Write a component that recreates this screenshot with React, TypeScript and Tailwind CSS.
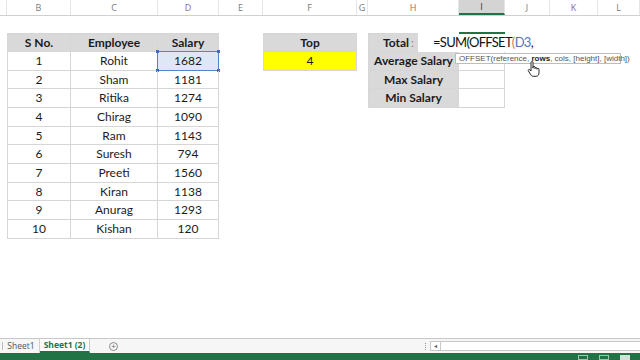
import React from "react";

const WIDTHS = [
  "w-[7px]",
  "w-[64px]",
  "w-[87px]",
  "w-[61px]",
  "w-[44px]",
  "w-[94px]",
  "w-[11px]",
  "w-[91px]",
  "w-[46px]",
  "w-[45px]",
  "w-[48px]",
  "w-[42px]",
];
const LETTERS = ["", "B", "C", "D", "E", "F", "G", "H", "I", "J", "K", "L"];

const table1 = [
  ["S No.", "Employee", "Salary"],
  ["1", "Rohit", "1682"],
  ["2", "Sham", "1181"],
  ["3", "Ritika", "1274"],
  ["4", "Chirag", "1090"],
  ["5", "Ram", "1143"],
  ["6", "Suresh", "794"],
  ["7", "Preeti", "1560"],
  ["8", "Kiran", "1138"],
  ["9", "Anurag", "1293"],
  ["10", "Kishan", "120"],
];
const labels = ["Total :", "Average Salary", "Max Salary", "Min Salary"];

const B = "border-r border-b border-[#d6d6d6]";

function Cell({
  col,
  cls = "",
  children,
}: {
  col: number;
  cls?: string;
  children?: React.ReactNode;
}) {
  return (
    <div
      className={`${WIDTHS[col]} shrink-0 h-full flex items-center justify-center relative ${cls}`}
    >
      {children}
    </div>
  );
}

function DataRow({ i }: { i: number }) {
  const head = i === 0;
  const t = table1[i];
  const top = head ? "border-t" : "";
  return (
    <div className="flex h-[18.7px] text-[12px] text-[#1b1b1b]">
      <Cell col={0} />
      <Cell
        col={1}
        cls={`${B} border-l ${top} ${head ? "bg-[#d9d9d9] font-bold" : ""}`}
      >
        {t[0]}
      </Cell>
      <Cell col={2} cls={`${B} ${top} ${head ? "bg-[#d9d9d9] font-bold" : ""}`}>
        {t[1]}
      </Cell>
      <Cell
        col={3}
        cls={`${B} ${top} ${head ? "bg-[#d9d9d9] font-bold" : ""} ${
          i === 1 ? "bg-[#dde7f5]" : ""
        }`}
      >
        {t[2]}
        {i === 1 && (
          <>
            <div className="absolute inset-[-1px] border border-[#5a82c8]" />
            <div className="absolute left-[-2px] top-[-2px] w-[3px] h-[3px] bg-[#3f6cbf]" />
            <div className="absolute right-[-2px] top-[-2px] w-[3px] h-[3px] bg-[#3f6cbf]" />
            <div className="absolute left-[-2px] bottom-[-2px] w-[3px] h-[3px] bg-[#3f6cbf]" />
            <div className="absolute right-[-2px] bottom-[-2px] w-[3px] h-[3px] bg-[#3f6cbf]" />
          </>
        )}
      </Cell>
      <Cell col={4} />
      {i === 0 ? (
        <Cell col={5} cls={`${B} border-l border-t bg-[#d9d9d9] font-bold`}>
          Top
        </Cell>
      ) : i === 1 ? (
        <Cell col={5} cls={`${B} border-l bg-[#ffff00]`}>
          4
        </Cell>
      ) : (
        <Cell col={5} />
      )}
      <Cell col={6} />
      {i < 4 ? (
        <Cell
          col={7}
          cls={`${B} border-l ${top} bg-[#d9d9d9] font-bold ${
            i === 0 ? "justify-start pl-[14px]" : ""
          }`}
        >
          {i === 0 ? (
            <span>
              Total<span className="text-[#8a8a8a] font-normal ml-[2px]">:</span>
            </span>
          ) : (
            labels[i]
          )}
        </Cell>
      ) : (
        <Cell col={7} />
      )}
      {i < 4 ? <Cell col={8} cls={`${B} ${top} bg-white`} /> : <Cell col={8} />}
      <Cell col={9} />
      <Cell col={10} />
      <Cell col={11} />
    </div>
  );
}

function Hand() {
  return (
    <svg width="13" height="16" viewBox="0 0 13 16">
      <path
        d="M4 1.6a1 1 0 0 1 2 0V7.2V6.3a1 1 0 0 1 2 0V7.6a1 1 0 0 1 2 0V8.3a1 1 0 0 1 2 0v3.4c0 2.2-1.2 3.6-2.8 3.6H6.2c-1.4 0-2-0.8-2.8-2.2L1.3 9.8a1 1 0 0 1 1.6-1.1L4 10Z"
        fill="white"
        stroke="#111"
        strokeWidth="0.9"
        strokeLinejoin="round"
      />
    </svg>
  );
}

export default function App() {
  return (
    <div className="w-[640px] h-[360px] relative overflow-hidden bg-white flex flex-col font-['Lato',sans-serif]">
      {/* column headers */}
      <div className="flex h-[16px] border-b border-[#d0d0d0] bg-white shrink-0">
        {LETTERS.map((l, c) => (
          <div
            key={c}
            className={`${WIDTHS[c]} shrink-0 h-full flex items-center justify-center border-r border-[#e6e6e6] text-[9px] font-['Open_Sans',sans-serif] ${
              c === 8
                ? "bg-[#d4d4d4] text-[#333] border-b-2 border-b-[#217346]"
                : "text-[#7a7a7a]"
            }`}
          >
            {l}
          </div>
        ))}
      </div>

      {/* sheet body */}
      <div className="flex-1 flex flex-col">
        <div className="h-[17.3px] shrink-0" />
        {table1.map((_, i) => (
          <DataRow key={i} i={i} />
        ))}
      </div>

      {/* sheet tabs */}
      <div className="h-[15px] shrink-0 flex items-stretch border-t border-[#c8c8c8] bg-[#f6f6f6] text-[8.5px] font-['Open_Sans',sans-serif]">
        <div className="w-[3px] border-r border-[#bdbdbd] my-[3px]" />
        <div className="w-[37px] flex items-center justify-center text-[#555] border-r border-[#d0d0d0]">
          Sheet1
        </div>
        <div className="w-[50px] flex items-center justify-center bg-white text-[#217346] font-bold border-r border-[#c8c8c8] border-b-2 border-b-[#217346]">
          Sheet1 (2)
        </div>
        <div className="w-[28px] flex items-center justify-end">
          <div className="w-[9px] h-[9px] rounded-full border border-[#8a8a8a] flex items-center justify-center text-[8px] leading-none text-[#666]">
            +
          </div>
        </div>
        <div className="flex-1" />
        <div className="w-[9px] flex flex-col items-center justify-center gap-[1px]">
          <div className="w-[1px] h-[1px] bg-[#999]" />
          <div className="w-[1px] h-[1px] bg-[#999]" />
          <div className="w-[1px] h-[1px] bg-[#999]" />
          <div className="w-[1px] h-[1px] bg-[#999]" />
        </div>
        <div className="w-[210px] flex items-stretch my-[2px] border-y border-l border-[#c8c8c8] bg-white">
          <div className="w-[10px] flex items-center justify-center border-r border-[#c8c8c8] text-[6px] text-[#555]">
            ◂
          </div>
          <div className="flex-1" />
        </div>
      </div>

      {/* status bar */}
      <div className="h-[7px] shrink-0 bg-[#217346] flex items-start justify-end gap-[11px] pr-[10px]">
        <div className="w-[10px] h-[5px] mt-[2px] border border-[#9fc3ad]" />
        <div className="w-[10px] h-[5px] mt-[2px] border border-[#9fc3ad]" />
        <div className="w-[10px] h-[5px] mt-[2px] bg-[#cfe3d6]" />
      </div>

      {/* formula edit box over cells */}
      <div className="absolute left-[418px] top-[33px] w-[127px] h-[19px] bg-white flex items-center pl-[15px] text-[13px] tracking-[-0.7px] text-[#111] whitespace-nowrap">
        =SUM(OFFSET<span className="text-[#d2776a]">(</span>
        <span className="text-[#4a78c2]">D3</span>,
      </div>
      <div className="absolute left-[459px] top-[32px] w-[46px] h-[2px] bg-[#217346]" />

      {/* tooltip */}
      <div className="absolute left-[455px] top-[53px] w-[166px] h-[11px] border border-[#bdbdbd] bg-white flex items-center pl-[3px] text-[8px] text-[#555] font-['Liberation_Sans',sans-serif] whitespace-nowrap">
        OFFSET(reference,&nbsp;<b className="text-[#222]">rows</b>, cols, [height], [width])
      </div>

      {/* cursor */}
      <div className="absolute left-[527px] top-[61px]">
        <Hand />
      </div>
    </div>
  );
}
